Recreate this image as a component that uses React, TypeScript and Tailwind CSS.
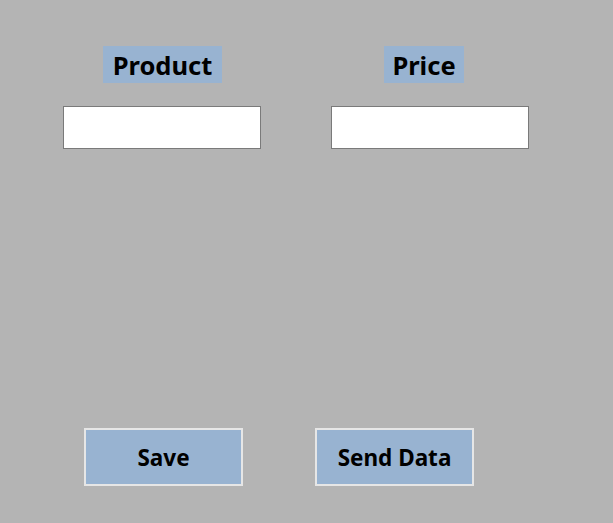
export default function App() {
  return (
    <div className="w-[613px] h-[523px] bg-[#b4b4b4] font-['Noto_Sans',sans-serif] text-black">
      <div className="flex gap-[70px] pl-[63px] pt-[46px]">
        <div className="flex flex-col w-[198px]">
          <div className="ml-[40px] w-[119px] h-[37px] bg-[#98b3d1] flex items-center justify-center pt-[3px] text-[25.5px] font-bold leading-none">
            Product
          </div>
          <input type="text" className="mt-[23px] h-[43px] w-[198px] bg-white border border-[#7a7a7a] outline-none" />
        </div>
        <div className="flex flex-col w-[198px]">
          <div className="ml-[53px] w-[80px] h-[37px] bg-[#98b3d1] flex items-center justify-center pt-[3px] text-[25.5px] font-bold leading-none">
            Price
          </div>
          <input type="text" className="mt-[23px] h-[43px] w-[198px] bg-white border border-[#7a7a7a] outline-none" />
        </div>
      </div>
      <div className="flex gap-[72px] pl-[84px] pt-[279px]">
        <button className="w-[159px] h-[58px] bg-[#98b3d1] border-2 border-[#e6e6e6] pt-[3px] text-[22.5px] font-bold leading-none">
          Save
        </button>
        <button className="w-[159px] h-[58px] bg-[#98b3d1] border-2 border-[#e6e6e6] pt-[3px] text-[22.5px] font-bold leading-none">
          Send Data
        </button>
      </div>
    </div>
  );
}
